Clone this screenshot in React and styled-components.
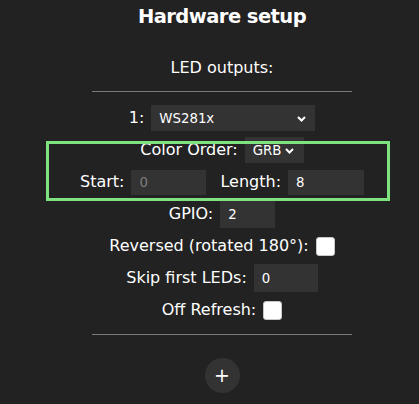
import React from "react";
import styled, { createGlobalStyle } from "styled-components";

const Global = createGlobalStyle`
  html, body { margin: 0; padding: 0; background: #222; }
  body {
    color: #fff;
    font-family: "DejaVu Sans", Verdana, sans-serif;
    font-size: 16px;
  }
  * { box-sizing: border-box; }
`;

const Page = styled.div`
  position: relative;
  width: 419px;
  height: 404px;
  overflow: hidden;
  padding-left: 25px;
  display: flex;
  flex-direction: column;
  align-items: center;
  text-align: center;
`;

const Title = styled.h3`
  margin: 0;
  padding-top: 1px;
  font-size: 19.5px;
  letter-spacing: -0.55px;
  font-weight: bold;
  line-height: 32px;
`;

const Subtitle = styled.div`
  margin-top: 18.5px;
  line-height: 32px;
  font-size: 16px;
`;

const Rule = styled.div`
  width: 260px;
  height: 1px;
  background: #7a7a7a;
  margin-top: ${(p) => p.$top}px;
`;

const Rows = styled.div`
  margin-top: 10px;
  display: flex;
  flex-direction: column;
  align-items: center;
`;

const Row = styled.div`
  height: 32px;
  display: flex;
  align-items: center;
  justify-content: center;
  gap: 14px;
`;

const Field = styled.div`
  display: flex;
  align-items: center;
  gap: 7px;
`;

const Label = styled.span`
  line-height: 32px;
  font-size: 16px;
  white-space: nowrap;
`;

const SelectWrap = styled.div`
  position: relative;
  display: flex;
`;

const Select = styled.select`
  appearance: none;
  -webkit-appearance: none;
  width: ${(p) => p.$w}px;
  height: 26px;
  background: #333;
  color: #fff;
  border: none;
  border-radius: 0;
  padding: 0 22px 0 8px;
  font-family: "DejaVu Sans", Verdana, sans-serif;
  font-size: 13.33px;
  outline: none;
`;

const Chevron = styled.svg`
  position: absolute;
  right: ${(p) => p.$r}px;
  top: 11px;
  pointer-events: none;
`;

const Input = styled.input`
  width: ${(p) => p.$w}px;
  height: ${(p) => p.$h || 26}px;
  background: #333;
  color: #fff;
  border: none;
  border-radius: 0;
  padding: 0 8px;
  font-family: "DejaVu Sans", Verdana, sans-serif;
  font-size: 13.33px;
  outline: none;
  &:disabled {
    color: #7d7d7d;
    background: #333;
  }
`;

const Check = styled.input`
  appearance: none;
  -webkit-appearance: none;
  width: 19px;
  height: 19px;
  margin: 0;
  background: #fff;
  border: 1px solid #c8c8c8;
  border-radius: 3px;
`;

const AddButton = styled.button`
  margin-top: 22.5px;
  width: 35px;
  height: 35px;
  border-radius: 50%;
  border: none;
  background: #333;
  color: #fff;
  font-family: "DejaVu Sans", Verdana, sans-serif;
  font-size: 19px;
  line-height: 35px;
  padding: 0;
  display: flex;
  align-items: center;
  justify-content: center;
`;

const Highlight = styled.div`
  position: absolute;
  left: 46px;
  top: 141px;
  width: 344px;
  height: 60px;
  border: 3px solid #7ee37e;
  pointer-events: none;
`;

const ChevronIcon = ({ r }) => (
  <Chevron $r={r} width="9" height="6" viewBox="0 0 9 6">
    <path d="M1 1 L4.5 4.5 L8 1" fill="none" stroke="#fff" strokeWidth="2" />
  </Chevron>
);

export default function App() {
  return (
    <>
      <Global />
      <Page>
        <Title>Hardware setup</Title>
        <Subtitle>LED outputs:</Subtitle>
        <Rule $top={7.5} />
        <Rows>
          <Row>
            <Field>
              <Label>1:</Label>
              <SelectWrap>
                <Select $w={164} defaultValue="ws">
                  <option value="ws">WS281x</option>
                  <option value="sk">SK6812 RGBW</option>
                </Select>
                <ChevronIcon r={9} />
              </SelectWrap>
            </Field>
          </Row>
          <Row>
            <Field>
              <Label>Color Order:</Label>
              <SelectWrap>
                <Select $w={59} defaultValue="grb">
                  <option value="grb">GRB</option>
                  <option value="rgb">RGB</option>
                </Select>
                <ChevronIcon r={10} />
              </SelectWrap>
            </Field>
          </Row>
          <Row>
            <Field>
              <Label>Start:</Label>
              <Input $w={75} $h={25} defaultValue="0" disabled />
            </Field>
            <Field>
              <Label>Length:</Label>
              <Input $w={76} $h={25} defaultValue="8" />
            </Field>
          </Row>
          <Row>
            <Field>
              <Label>GPIO:</Label>
              <Input $w={55} $h={27} defaultValue="2" />
            </Field>
          </Row>
          <Row>
            <Field>
              <Label>Reversed (rotated 180°):</Label>
              <Check type="checkbox" />
            </Field>
          </Row>
          <Row>
            <Field>
              <Label>Skip first LEDs:</Label>
              <Input $w={64} $h={28} defaultValue="0" />
            </Field>
          </Row>
          <Row>
            <Field>
              <Label>Off Refresh:</Label>
              <Check type="checkbox" />
            </Field>
          </Row>
        </Rows>
        <Rule $top={8} />
        <AddButton type="button">+</AddButton>
        <Highlight />
      </Page>
    </>
  );
}
